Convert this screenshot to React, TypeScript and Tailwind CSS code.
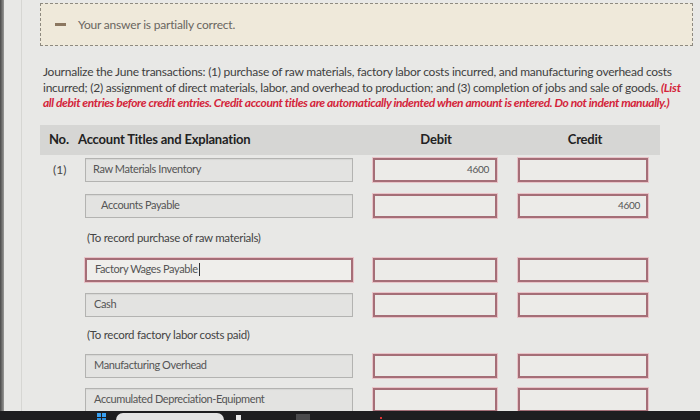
import React from "react";

type Row = {
  title: string;
  indent: number;
  debit?: string;
  credit?: string;
  active?: boolean;
  label?: string;
  mt: number;
};

const font = { fontFamily: "Lato, 'Open Sans', sans-serif" };

function AmountBox({ value }: { value?: string }) {
  return (
    <div className="h-[24px] border-2 border-[#a56e77] shadow-[0_0_0_1px_#e9c3c8] bg-[#ecebe8] flex items-center justify-end pr-[6px] text-[10px] text-[#555] tracking-[-0.3px]">
      {value}
    </div>
  );
}

function EntryRow({ row }: { row: Row }) {
  return (
    <div className="flex items-center" style={{ marginTop: row.mt }}>
      <div className="w-[45px] shrink-0 pl-[13px] text-[12px] text-[#444]">{row.label}</div>
      <div
        className={
          row.active
            ? "w-[268px] shrink-0 h-[24px] border-2 border-[#a56e77] shadow-[0_0_0_1px_#e9c3c8] bg-[#efeeeb] flex items-center whitespace-nowrap overflow-hidden text-[11px] text-[#555] tracking-[-0.4px]"
            : "w-[268px] shrink-0 h-[24px] border border-[#b3b3b1] bg-[#e3e3e1] shadow-[inset_0_1px_1px_rgba(0,0,0,0.06)] flex items-center whitespace-nowrap overflow-hidden text-[11px] text-[#555] tracking-[-0.4px]"
        }
        style={{ paddingLeft: row.indent }}
      >
        {row.title}
        {row.active && <span className="ml-[1px] w-[1px] h-[13px] bg-[#333]" />}
      </div>
      <div className="w-[124px] shrink-0 ml-[20px]">
        <AmountBox value={row.debit} />
      </div>
      <div className="w-[130px] shrink-0 ml-[21px]">
        <AmountBox value={row.credit} />
      </div>
    </div>
  );
}

function Note({ text, h }: { text: string; h: number }) {
  return (
    <div
      className="flex items-center pl-[47px] whitespace-nowrap text-[11.5px] tracking-[-0.3px] text-[#444]"
      style={{ height: h }}
    >
      {text}
    </div>
  );
}

export default function App() {
  const group1: Row[] = [
    { label: "(1)", title: "Raw Materials Inventory", indent: 7, debit: "4600", mt: 0 },
    { title: "Accounts Payable", indent: 15, credit: "4600", mt: 12 },
  ];
  const group2: Row[] = [
    { title: "Factory Wages Payable", indent: 8, active: true, mt: 0 },
    { title: "Cash", indent: 8, mt: 11 },
  ];
  const group3: Row[] = [
    { title: "Manufacturing Overhead", indent: 8, mt: 0 },
    { title: "Accumulated Depreciation-Equipment", indent: 8, mt: 10 },
  ];

  return (
    <div className="w-[700px] h-[420px] overflow-hidden relative bg-[#e8e8e6] flex" style={font}>
      {/* monitor bezel edge */}
      <div className="w-[4px] h-full bg-gradient-to-r from-[#4a4a4a] to-[#9a9a98]" />
      <div className="w-[18px] h-full border-r border-[#d6d6d3]" />
      <div className="flex-1 flex flex-col pl-[18px]">
        {/* feedback banner */}
        <div className="mt-[3px] w-[653px] h-[43px] border border-dashed border-[#8e8a80] bg-[#efe9da] flex items-center">
          <div className="ml-[14px] w-[11px] h-[3px] bg-[#8b7760]" />
          <span className="ml-[12px] text-[12px] text-[#6a6660] tracking-[-0.2px]">
            Your answer is partially correct.
          </span>
        </div>

        {/* instructions */}
        <div className="mt-[18px] pl-[3px] whitespace-nowrap text-[12px] leading-[15.5px] text-[#3f3f3f] tracking-[-0.25px]">
          Journalize the June transactions: (1) purchase of raw materials, factory labor costs incurred, and manufacturing overhead costs
          <br />
          incurred; (2) assignment of direct materials, labor, and overhead to production; and (3) completion of jobs and sale of goods.{" "}
          <span className="font-bold italic text-[#d4243a]">(List</span>
          <br />
          <span className="font-bold italic text-[#d4243a] tracking-[-0.4px]">
            all debit entries before credit entries. Credit account titles are automatically indented when amount is entered. Do not indent manually.)
          </span>
        </div>

        {/* table header */}
        <div className="mt-[14px] w-[620px] h-[30px] bg-[#d6d6d4] flex items-center overflow-hidden text-[13px] font-bold text-[#222] tracking-[-0.2px]">
          <span className="shrink-0 pl-[9px] w-[38px]">No.</span>
          <span className="shrink-0 w-[296px]">Account Titles and Explanation</span>
          <span className="shrink-0 w-[124px] text-center">Debit</span>
          <span className="shrink-0 w-[174px] text-center">Credit</span>
        </div>

        {/* journal rows */}
        <div className="mt-[3px] flex flex-col">
          {group1.map((r, i) => (
            <EntryRow key={"a" + i} row={r} />
          ))}
          <Note text="(To record purchase of raw materials)" h={40} />
          {group2.map((r, i) => (
            <EntryRow key={"b" + i} row={r} />
          ))}
          <Note text="(To record factory labor costs paid)" h={37} />
          {group3.map((r, i) => (
            <EntryRow key={"c" + i} row={r} />
          ))}
        </div>
      </div>

      {/* taskbar */}
      <div className="absolute left-0 right-0 bottom-0 h-[9px] bg-[#1e1e20] flex items-end">
        <div className="ml-[97px] mb-[-2px] grid grid-cols-2 gap-[1px] w-[9px] h-[9px]">
          <div className="bg-[#3aa0f0]" />
          <div className="bg-[#3aa0f0]" />
          <div className="bg-[#2a8fe0]" />
          <div className="bg-[#2a8fe0]" />
        </div>
        <div className="ml-[10px] w-[108px] h-[7px] rounded-t-full bg-[#e4e4e4]" />
        <div className="ml-[12px] w-[5px] h-[5px] bg-[#e8e8e8]" />
        <div className="ml-[55px] w-[14px] h-[6px] bg-[#4a4a4c]" />
        <div className="ml-[70px] mb-[1px] w-[2px] h-[2px] bg-[#d33]" />
      </div>
    </div>
  );
}
